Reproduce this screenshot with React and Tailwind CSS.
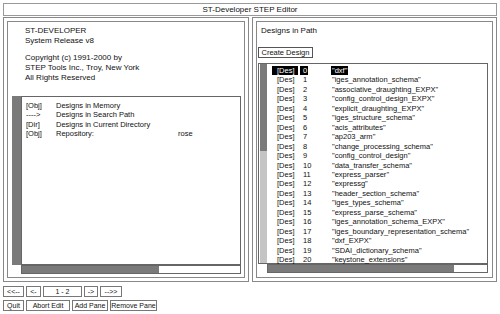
import React from 'react';

const designs = [
  'dxf',
  'iges_annotation_schema',
  'associative_draughting_EXPX',
  'config_control_design_EXPX',
  'explicit_draughting_EXPX',
  'iges_structure_schema',
  'acis_attributes',
  'ap203_arm',
  'change_processing_schema',
  'config_control_design',
  'data_transfer_schema',
  'express_parser',
  'expressg',
  'header_section_schema',
  'iges_types_schema',
  'express_parse_schema',
  'iges_annotation_schema_EXPX',
  'iges_boundary_representation_schema',
  'dxf_EXPX',
  'SDAI_dictionary_schema',
  'keystone_extensions',
];

const memoryRows = [
  ['[Obj]', 'Designs in Memory', ''],
  ['---->', 'Designs in Search Path', ''],
  ['[Dir]', 'Designs in Current Directory', ''],
  ['[Obj]', 'Repository:', 'rose'],
];

function Btn({ children, w }) {
  return (
    <div className={`${w} h-[11px] border border-[#777] flex items-center justify-center leading-none whitespace-nowrap text-[7px]`}>
      {children}
    </div>
  );
}

function Pane({ children, w }) {
  return (
    <div className={`${w} h-[265px] border border-[#888] p-[3px] flex`}>
      <div className="flex-1 border border-[#888] flex flex-col">{children}</div>
    </div>
  );
}

export default function App() {
  return (
    <div className="w-[500px] h-[314px] bg-white text-[#111] antialiased overflow-hidden pt-[3px] pl-[3px] text-[8px] font-['Liberation_Sans',Arial,sans-serif]">
      {/* title */}
      <div className="w-[494px] h-[13px] border border-[#999] flex items-center justify-center leading-none">
        ST-Developer STEP Editor
      </div>

      <div className="flex gap-[3px] mt-[1px]">
        {/* left pane */}
        <Pane w="w-[246px]">
          <div className="pl-[17px] pt-[4px] leading-[10px]">
            <div>ST-DEVELOPER</div>
            <div>System Release v8</div>
            <div className="mt-[7px]">Copyright (c) 1991-2000 by</div>
            <div>STEP Tools Inc., Troy, New York</div>
            <div>All Rights Reserved</div>
          </div>
          <div className="mt-[13px] ml-[4px] mr-[3px] flex flex-col">
            <div className="flex h-[169px]">
              <div className="w-[9px] bg-[#7a7a7a]" />
              <div className="flex-1 border border-[#666] pt-[4px] pl-[4px] leading-[9.4px] text-[7.5px]">
                {memoryRows.map(([a, b, c], i) => (
                  <div key={i} className="flex whitespace-nowrap">
                    <span className="w-[30px]">{a}</span>
                    <span className="w-[122px]">{b}</span>
                    <span>{c}</span>
                  </div>
                ))}
              </div>
            </div>
            <div className="flex h-[9px]">
              <div className="w-[9px]" />
              <div className="flex-1 border border-[#666] flex">
                <div className="w-[137px] bg-[#7a7a7a]" />
              </div>
            </div>
          </div>
        </Pane>

        {/* right pane */}
        <Pane w="w-[245px]">
          <div className="pl-[4px] pt-[4px] leading-[10px]">Designs in Path</div>
          <div className="mt-[11px] ml-[1px]">
            <div className="w-[55px] h-[11px] border border-[#555] flex items-center justify-center leading-none text-[7.5px]">
              Create Design
            </div>
          </div>
          <div className="mt-[5px] ml-[1px] mr-[4px] flex flex-col">
            <div className="flex h-[201px] border border-[#666]">
              <div className="w-[7px] ml-[1px] flex flex-col bg-[#c4c4c4]">
                <div className="h-[87px] bg-[#7a7a7a]" />
              </div>
              <div className="flex-1 pt-[2px] pl-[5px] leading-[9.45px] text-[7.5px]">
                {designs.map((name, i) => {
                  const sel = i === 0;
                  const hl = sel ? 'bg-black text-white' : '';
                  return (
                    <div key={i} className="flex whitespace-nowrap">
                      <span className="w-[28px]">
                        <span className={`inline-block pl-[5px] pr-[3px] ${hl}`}>[Des]</span>
                      </span>
                      <span className="w-[31px]">
                        <span className={`inline-block pl-[3px] pr-[1px] ${hl}`}>{i}</span>
                      </span>
                      <span>
                        <span className={`inline-block px-[1px] ${hl}`}>"{name}"</span>
                      </span>
                    </div>
                  );
                })}
              </div>
            </div>
            <div className="flex h-[9px]">
              <div className="w-[9px]" />
              <div className="flex-1 border border-[#666] flex">
                <div className="w-[186px] bg-[#7a7a7a]" />
              </div>
            </div>
          </div>
        </Pane>
      </div>

      {/* bottom buttons */}
      <div className="flex gap-[2px] mt-[4px]">
        <Btn w="w-[21px]">{'<<--'}</Btn>
        <Btn w="w-[15px]">{'<-'}</Btn>
        <Btn w="w-[39px]">1 - 2</Btn>
        <Btn w="w-[14px]">{'->'}</Btn>
        <Btn w="w-[22px]">{'-->>'}</Btn>
      </div>
      <div className="flex gap-[2px] mt-[3px]">
        <Btn w="w-[21px]">Quit</Btn>
        <Btn w="w-[44px]">Abort Edit</Btn>
        <Btn w="w-[36px]">Add Pane</Btn>
        <Btn w="w-[47px]">Remove Pane</Btn>
      </div>
    </div>
  );
}
